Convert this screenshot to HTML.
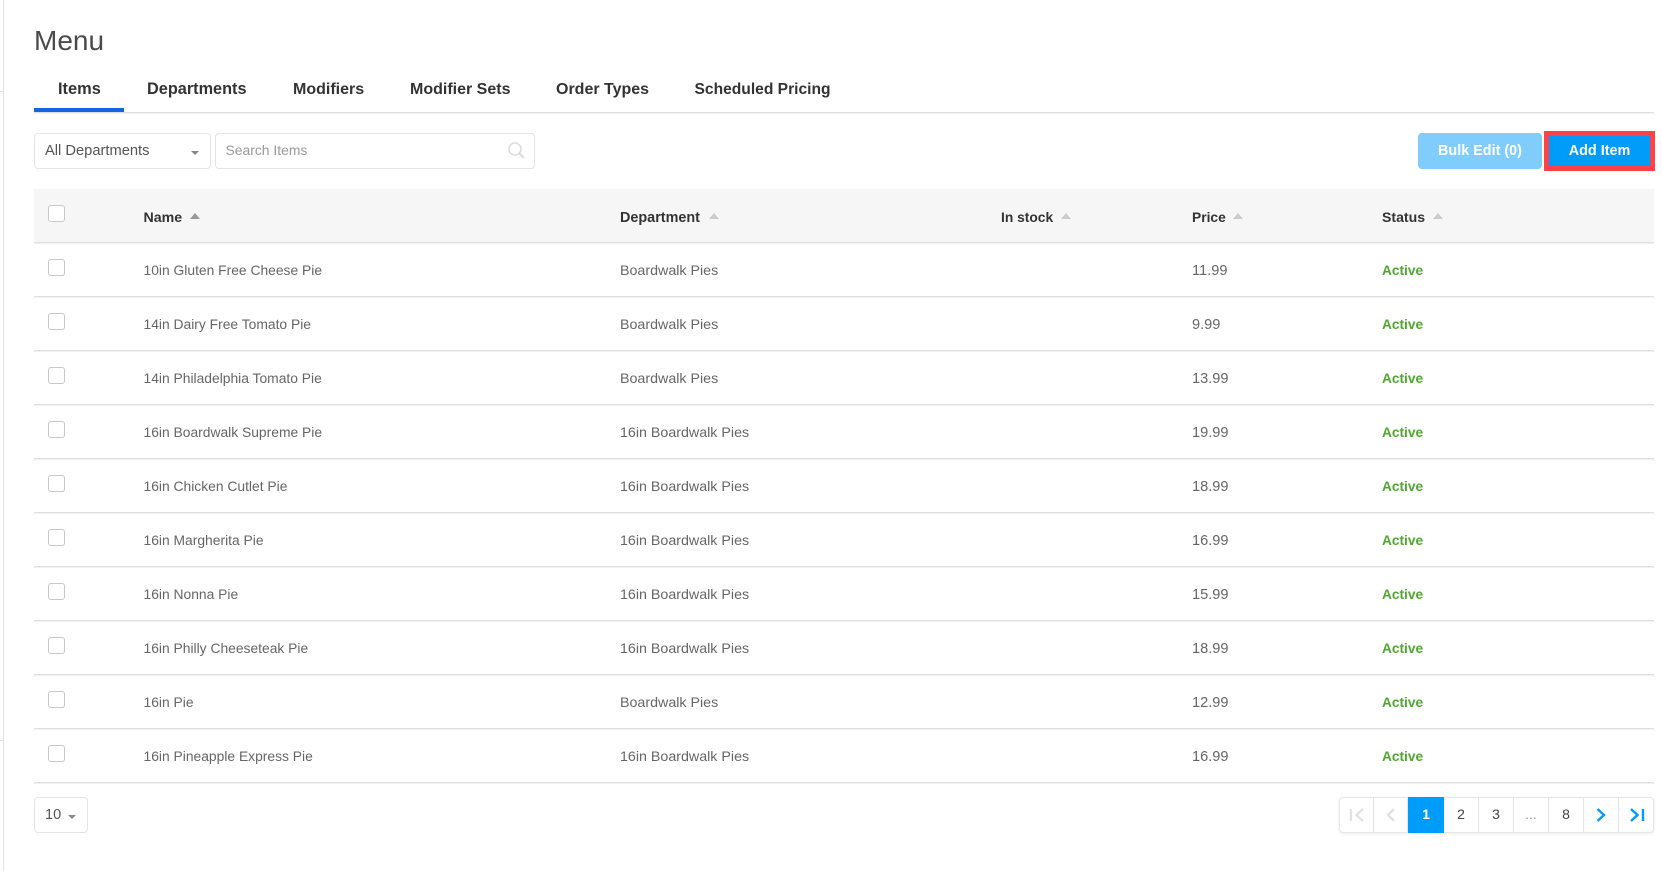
<!DOCTYPE html>
<html lang="en">
<head>
<meta charset="utf-8">
<title>Menu</title>
<style>
html,body{margin:0;padding:0;background:#fff;}
body{position:relative;width:1662px;height:871px;overflow:hidden;font-family:"Liberation Sans",sans-serif;color:#666;}
.a{position:absolute;white-space:nowrap;}
.line{position:absolute;background:#dfdfdf;height:1px;left:34px;width:1620px;box-shadow:0 1px 0 #f1f1f1;}
.tab{position:absolute;top:81px;line-height:18px;font-size:16px;font-weight:700;color:#333;white-space:nowrap;}
.box{position:absolute;border:1px solid #e4e4e4;border-radius:4px;box-sizing:border-box;background:#fff;}
.cb{position:absolute;left:48px;width:17px;height:17px;box-sizing:border-box;border:1.5px solid #c8c8c8;border-radius:3px;background:#fff;}
.c{position:absolute;line-height:18px;font-size:13.85px;color:#666;white-space:nowrap;margin-top:1px;}
.n{left:143.5px;margin-top:0;}.d{left:620px;font-size:14.25px;}.p{left:1192px;font-size:14.6px;}
.s{left:1382px;font-weight:700;color:#4fa82f;font-size:13.7px;}
.h{position:absolute;top:209px;line-height:18px;font-size:13.8px;font-weight:700;color:#333;white-space:nowrap;}
.t{position:absolute;top:213px;width:0;height:0;border-left:5.5px solid transparent;border-right:5.5px solid transparent;border-bottom:6px solid #ccc;}
.pg{position:absolute;top:797px;height:36px;line-height:34px;text-align:center;font-size:14px;color:#444;box-sizing:border-box;border-right:1.5px solid #e4e4e4;}
</style>
</head>
<body>
<div class="a" style="left:3px;top:0;width:1px;height:871px;background:#e3e3e3"></div>
<div class="a" style="left:0;top:91px;width:3px;height:1px;background:#e3e3e3"></div>
<div class="a" style="left:0;top:740px;width:3px;height:1px;background:#e3e3e3"></div>

<div class="a" style="left:34px;top:24px;font-size:28px;line-height:34px;color:#4a4a4a;">Menu</div>

<div class="tab" style="left:58px;font-size:16.4px;top:80px">Items</div>
<div class="tab" style="left:147px;font-size:16.3px;top:80px">Departments</div>
<div class="tab" style="left:293px">Modifiers</div>
<div class="tab" style="left:410px">Modifier Sets</div>
<div class="tab" style="left:556px">Order Types</div>
<div class="tab" style="left:694.5px;font-size:15.6px">Scheduled Pricing</div>
<div class="line" style="top:112px"></div>
<div class="a" style="left:34px;top:108px;width:90px;height:4px;background:#1565e0"></div>

<div class="box" style="left:34px;top:133px;width:177px;height:36px"></div>
<div class="a" style="left:45px;top:142px;font-size:14.7px;line-height:18px;color:#555">All Departments</div>
<div class="a" style="left:191px;top:151px;width:0;height:0;border-left:4px solid transparent;border-right:4px solid transparent;border-top:4px solid #888"></div>

<div class="box" style="left:215px;top:133px;width:320px;height:36px"></div>
<div class="a" style="left:225.5px;top:141px;font-size:13.9px;line-height:18px;color:#999">Search Items</div>
<svg class="a" style="left:507px;top:141px" width="19" height="19" viewBox="0 0 19 19" fill="none" stroke="#dedede"><circle cx="8" cy="8" r="6" stroke-width="1.6"/><path d="M12.5 12.5L17 17" stroke-width="2.4"/></svg>

<div class="a" style="left:1418px;top:133px;width:124px;height:36px;background:#80cdfc;border-radius:4px;color:#fff;font-size:14.4px;font-weight:700;line-height:37px;text-align:center;">Bulk Edit (0)</div>
<div class="a" style="left:1544px;top:131px;width:111px;height:40px;box-sizing:border-box;border:5px solid #ff4248;background:#009cfa;color:#fff;font-size:14.4px;font-weight:700;line-height:31px;text-align:center;">Add Item</div>

<div class="a" style="left:34px;top:189px;width:1620px;height:53px;background:#f6f6f6"></div>
<div class="cb" style="top:205px"></div>
<div class="h" style="left:143.5px;font-size:14.2px">Name</div><div class="t" style="left:190px;border-bottom-color:#999"></div>
<div class="h" style="left:620px;font-size:14.4px">Department</div><div class="t" style="left:709px"></div>
<div class="h" style="left:1001px">In stock</div><div class="t" style="left:1061px"></div>
<div class="h" style="left:1192px">Price</div><div class="t" style="left:1233px"></div>
<div class="h" style="left:1382px;font-size:14.1px;top:208px">Status</div><div class="t" style="left:1433px"></div>

<div class="line" style="top:242px"></div>
<div class="cb" style="top:259px"></div>
<div class="c n" style="top:261px">10in Gluten Free Cheese Pie</div><div class="c d" style="top:261px">Boardwalk Pies</div><div class="c p" style="top:261px">11.99</div><div class="c s" style="top:261px">Active</div>
<div class="line" style="top:296px"></div>
<div class="cb" style="top:313px"></div>
<div class="c n" style="top:315px">14in Dairy Free Tomato Pie</div><div class="c d" style="top:315px">Boardwalk Pies</div><div class="c p" style="top:315px">9.99</div><div class="c s" style="top:315px">Active</div>
<div class="line" style="top:350px"></div>
<div class="cb" style="top:367px"></div>
<div class="c n" style="top:369px">14in Philadelphia Tomato Pie</div><div class="c d" style="top:369px">Boardwalk Pies</div><div class="c p" style="top:369px">13.99</div><div class="c s" style="top:369px">Active</div>
<div class="line" style="top:404px"></div>
<div class="cb" style="top:421px"></div>
<div class="c n" style="top:423px">16in Boardwalk Supreme Pie</div><div class="c d" style="top:423px">16in Boardwalk Pies</div><div class="c p" style="top:423px">19.99</div><div class="c s" style="top:423px">Active</div>
<div class="line" style="top:458px"></div>
<div class="cb" style="top:475px"></div>
<div class="c n" style="top:477px">16in Chicken Cutlet Pie</div><div class="c d" style="top:477px">16in Boardwalk Pies</div><div class="c p" style="top:477px">18.99</div><div class="c s" style="top:477px">Active</div>
<div class="line" style="top:512px"></div>
<div class="cb" style="top:529px"></div>
<div class="c n" style="top:531px">16in Margherita Pie</div><div class="c d" style="top:531px">16in Boardwalk Pies</div><div class="c p" style="top:531px">16.99</div><div class="c s" style="top:531px">Active</div>
<div class="line" style="top:566px"></div>
<div class="cb" style="top:583px"></div>
<div class="c n" style="top:585px">16in Nonna Pie</div><div class="c d" style="top:585px">16in Boardwalk Pies</div><div class="c p" style="top:585px">15.99</div><div class="c s" style="top:585px">Active</div>
<div class="line" style="top:620px"></div>
<div class="cb" style="top:637px"></div>
<div class="c n" style="top:639px">16in Philly Cheeseteak Pie</div><div class="c d" style="top:639px">16in Boardwalk Pies</div><div class="c p" style="top:639px">18.99</div><div class="c s" style="top:639px">Active</div>
<div class="line" style="top:674px"></div>
<div class="cb" style="top:691px"></div>
<div class="c n" style="top:693px">16in Pie</div><div class="c d" style="top:693px">Boardwalk Pies</div><div class="c p" style="top:693px">12.99</div><div class="c s" style="top:693px">Active</div>
<div class="line" style="top:728px"></div>
<div class="cb" style="top:745px"></div>
<div class="c n" style="top:747px">16in Pineapple Express Pie</div><div class="c d" style="top:747px">16in Boardwalk Pies</div><div class="c p" style="top:747px">16.99</div><div class="c s" style="top:747px">Active</div>
<div class="line" style="top:782px"></div>

<div class="box" style="left:34px;top:797px;width:54px;height:36px"></div>
<div class="a" style="left:45px;top:806px;font-size:14.5px;line-height:18px;color:#555">10</div>
<div class="a" style="left:68px;top:815px;width:0;height:0;border-left:4px solid transparent;border-right:4px solid transparent;border-top:4px solid #888"></div>

<div class="a" style="left:1339px;top:797px;width:315px;height:36px;box-sizing:border-box;border:1.5px solid #e6e6e6;border-radius:4px;box-shadow:0 1px 3px rgba(0,0,0,.08);background:#fff"></div>
<div class="pg" style="left:1339px;width:35px"></div>
<div class="pg" style="left:1374px;width:34px"></div>
<div class="a" style="left:1408px;top:797px;width:36px;height:36px;background:#009cfa;color:#fff;font-size:14px;font-weight:700;line-height:35px;text-align:center">1</div>
<div class="pg" style="left:1444px;width:35px">2</div>
<div class="pg" style="left:1479px;width:35px">3</div>
<div class="pg" style="left:1514px;width:35px;color:#999">...</div>
<div class="pg" style="left:1549px;width:35px">8</div>
<div class="pg" style="left:1584px;width:35px"></div>
<svg class="a" style="left:1339px;top:797px" width="315" height="36" viewBox="0 0 315 36" fill="none">
<path d="M12 12V24" stroke="#e2e2e2" stroke-width="2.4"/>
<path d="M24 12L17.5 18L24 24" stroke="#e2e2e2" stroke-width="2.4"/>
<path d="M55 12L49 18L55 24" stroke="#e2e2e2" stroke-width="2.4"/>
<path d="M258.5 12L265 18L258.5 24" stroke="#009cfa" stroke-width="2.4"/>
<path d="M292 12L298.5 18L292 24" stroke="#009cfa" stroke-width="2.4"/>
<path d="M304 12V24" stroke="#009cfa" stroke-width="2.4"/>
</svg>
</body>
</html>
